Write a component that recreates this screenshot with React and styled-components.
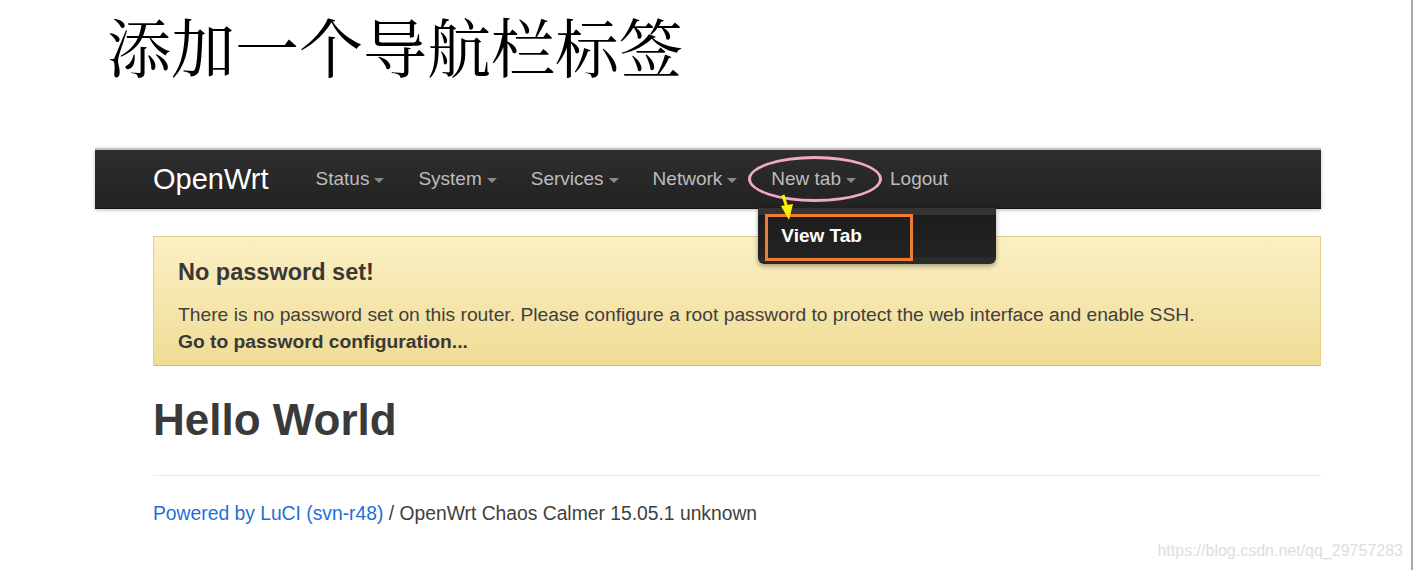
import React from "react";
import styled, { createGlobalStyle } from "styled-components";

const GlobalStyle = createGlobalStyle`
    html, body {
        margin: 0;
        padding: 0;
        background: #fff;
    }
    * {
        box-sizing: border-box;
    }
`;

const Slide = styled.div`
    position: relative;
    width: 1413px;
    height: 570px;
    overflow: hidden;
    border-right: 2px solid #a8a8a8;
    background: #fff;
`;

const Title = styled.h1`
    margin: 0 0 0 107px;
    font-family: "Noto Serif CJK SC", "Noto Sans CJK SC", serif;
    font-size: 64px;
    line-height: 88px;
    font-weight: 400;
    color: #000;
`;

const Screen = styled.div`
    margin: 60px 0 0 95px;
    width: 1226px;
    font-family: "Liberation Sans", Arial, sans-serif;
    color: #404040;
`;

const Topbar = styled.header`
    position: relative;
    z-index: 10;
    display: flex;
    align-items: center;
    height: 61px;
    padding-left: 58px;
    border-top: 2px solid #c4c4c4;
    border-bottom: 1px solid #141414;
    background: linear-gradient(#2e2e2e, #222);
    box-shadow: 0 1px 4px rgba(0, 0, 0, 0.25);
`;

const Brand = styled.a`
    margin-right: 30px;
    font-size: 29px;
    color: #fff;
    text-decoration: none;
`;

const Menu = styled.ul`
    display: flex;
    align-self: stretch;
    margin: 0;
    padding: 0;
    list-style: none;
`;

const MenuItem = styled.li`
    position: relative;
    display: flex;
    align-items: center;
    padding: 0 17px;
    font-size: 19px;
    color: #bdbdbd;
`;

const Caret = styled.span`
    margin-left: 5px;
    margin-top: 2px;
    border-left: 5px solid transparent;
    border-right: 5px solid transparent;
    border-top: 5px solid #8a8a8a;
`;

const Dropdown = styled.ul`
    position: absolute;
    top: 100%;
    left: 4px;
    width: 238px;
    margin: 0;
    padding: 7px 0 7px;
    list-style: none;
    background: linear-gradient(#343434, #2a2a2a);
    border-radius: 0 0 6px 6px;
    box-shadow: 0 2px 5px rgba(0, 0, 0, 0.35);
`;

const DropItem = styled.li`
    display: flex;
    align-items: center;
    height: 42px;
    padding: 0 23px;
    font-size: 19px;
    font-weight: bold;
    color: #fff;
    background: linear-gradient(#1d1d1d, #232323);
`;

const Highlight = styled.span`
    position: absolute;
    left: 7px;
    top: 6px;
    width: 148px;
    height: 47px;
    border: 3px solid #ed7d31;
    pointer-events: none;
`;

const Ellipse = styled.span`
    position: absolute;
    left: -6px;
    top: 6px;
    width: 134px;
    height: 46px;
    border: 3px solid #f2a9c9;
    border-radius: 50%;
    pointer-events: none;
`;

const Arrow = styled.svg`
    position: absolute;
    left: 25px;
    top: 44px;
    z-index: 20;
`;

const Container = styled.main`
    padding-left: 58px;
`;

const Alert = styled.div`
    margin-top: 27px;
    padding: 22px 24px 10px;
    border: 1px solid #e3d28f;
    border-top-color: #dccb8a;
    border-bottom-color: #cdbb72;
    background: linear-gradient(#fbf0c4, #f0dc96);
`;

const AlertTitle = styled.h4`
    margin: 0 0 15px;
    font-size: 23.5px;
    line-height: 27px;
    font-weight: bold;
    color: #383838;
`;

const AlertText = styled.p`
    margin: 0;
    font-size: 19.25px;
    line-height: 27px;
`;

const AlertLink = styled.a`
    display: block;
    font-weight: bold;
    color: #383838;
    text-decoration: none;
`;

const Heading = styled.h2`
    margin: 28px 0 0;
    font-size: 44px;
    line-height: 52px;
    font-weight: bold;
    color: #3a3a3a;
`;

const Rule = styled.hr`
    margin: 29px 0 0;
    border: 0;
    border-top: 1px solid #ececec;
`;

const Footer = styled.p`
    margin: 24px 0 0;
    font-size: 19.3px;
    line-height: 27px;
`;

const FooterLink = styled.a`
    color: #1d6fd8;
    text-decoration: none;
`;

const Watermark = styled.span`
    position: absolute;
    right: 8px;
    bottom: 9px;
    font-family: "Liberation Sans", Arial, sans-serif;
    font-size: 16px;
    line-height: 20px;
    color: #dedede;
`;

const menus = ["Status", "System", "Services", "Network"];

const App = () => {
    return (
        <Slide>
            <GlobalStyle />
            <Title>添加一个导航栏标签</Title>
            <Screen>
                <Topbar>
                    <Brand>OpenWrt</Brand>
                    <Menu>
                        {menus.map(m => (
                            <MenuItem key={m}>{m}<Caret /></MenuItem>
                        ))}
                        <MenuItem>
                            New tab<Caret />
                            <Ellipse />
                            <Dropdown>
                                <DropItem>View Tab</DropItem>
                                <Highlight />
                            </Dropdown>
                            <Arrow width="16" height="28" viewBox="0 0 16 28">
                                <path d="M4 1 L8 14" stroke="#ffef00" strokeWidth="3" fill="none" />
                                <path d="M2 12 L14 10 L10 26 Z" fill="#ffef00" />
                            </Arrow>
                        </MenuItem>
                        <MenuItem>Logout</MenuItem>
                    </Menu>
                </Topbar>
                <Container>
                    <Alert>
                        <AlertTitle>No password set!</AlertTitle>
                        <AlertText>
                            There is no password set on this router. Please configure a root password to protect the web interface and enable SSH.
                            <AlertLink>Go to password configuration...</AlertLink>
                        </AlertText>
                    </Alert>
                    <Heading>Hello World</Heading>
                    <Rule />
                    <Footer>
                        <FooterLink>Powered by LuCI (svn-r48)</FooterLink> / OpenWrt Chaos Calmer 15.05.1 unknown
                    </Footer>
                </Container>
            </Screen>
            <Watermark>https://blog.csdn.net/qq_29757283</Watermark>
        </Slide>
    );
};

export default App;
